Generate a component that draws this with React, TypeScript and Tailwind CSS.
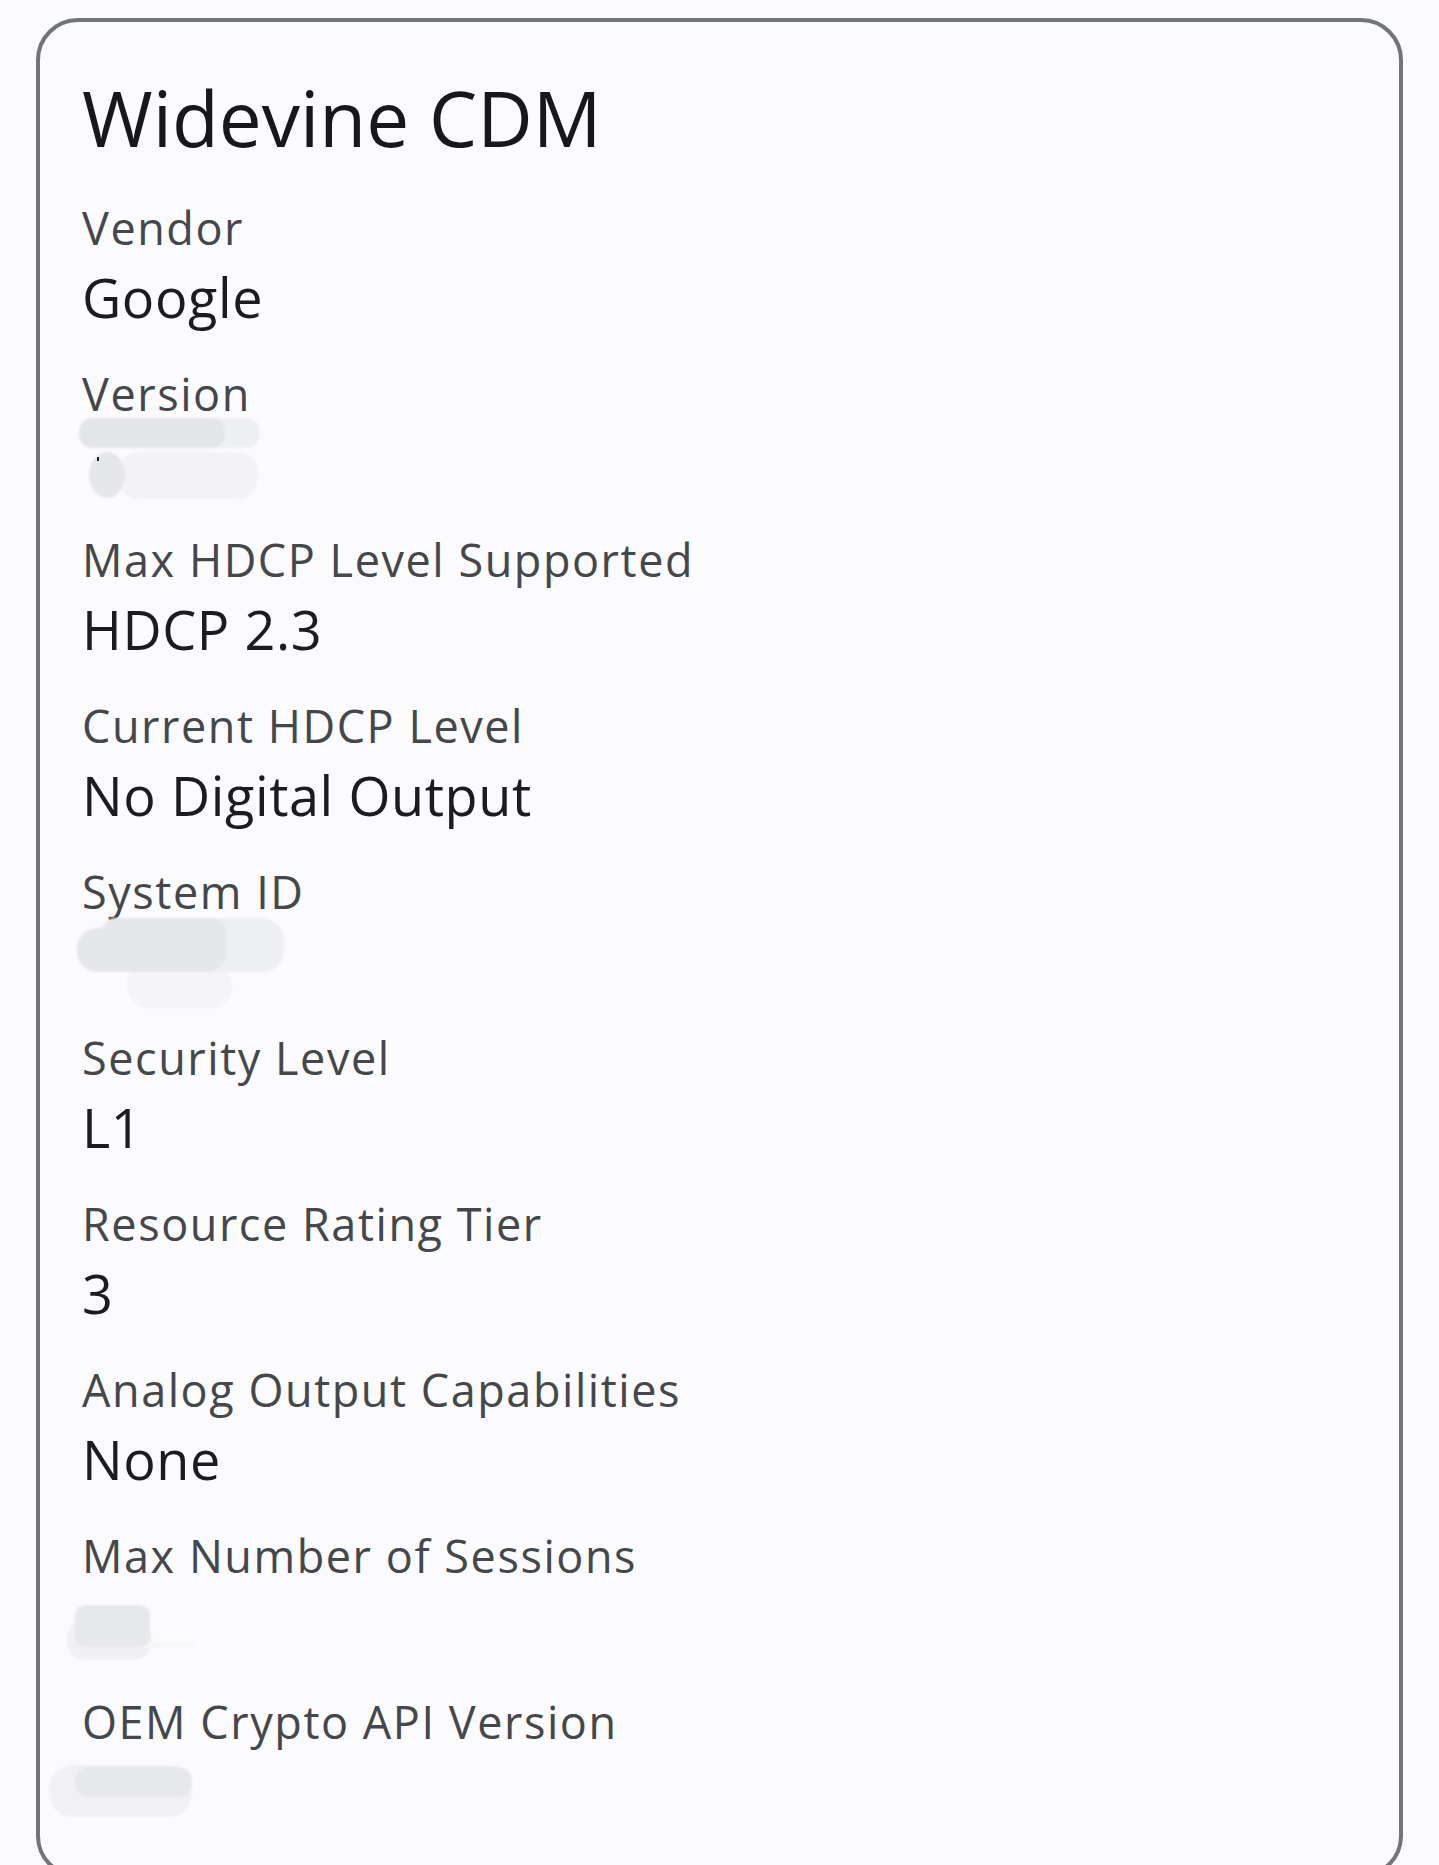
import React from "react";

type Blob = { kind: "rect" | "ellipse"; x: number; y: number; w: number; h: number; r?: number; fill: string };

function Smudge({ blobs, left, top, width, height }: { blobs: Blob[]; left: number; top: number; width: number; height: number }) {
  return (
    <svg
      className="absolute"
      style={{ left, top }}
      width={width}
      height={height}
      viewBox={`${left} ${top} ${width} ${height}`}
    >
      <defs>
        <filter id="soft" x="-20%" y="-20%" width="140%" height="140%">
          <feGaussianBlur stdDeviation="1.2" />
        </filter>
      </defs>
      <g filter="url(#soft)">
        {blobs.map((b, i) =>
          b.kind === "rect" ? (
            <rect key={i} x={b.x} y={b.y} width={b.w} height={b.h} rx={b.r ?? 0} fill={b.fill} />
          ) : (
            <ellipse key={i} cx={b.x + b.w / 2} cy={b.y + b.h / 2} rx={b.w / 2} ry={b.h / 2} fill={b.fill} />
          )
        )}
      </g>
    </svg>
  );
}

const versionBlobs: Blob[] = [
  { kind: "rect", x: 36, y: 24, w: 140, h: 47, r: 20, fill: "#f3f3f5" },
  { kind: "rect", x: -3, y: -10, w: 181, h: 30, r: 14, fill: "#eeeff1" },
  { kind: "rect", x: -3, y: -10, w: 146, h: 30, r: 14, fill: "#e4e5e7" },
  { kind: "ellipse", x: 7, y: 24, w: 36, h: 46, fill: "#e6e7e9" },
];

const systemBlobs: Blob[] = [
  { kind: "rect", x: 45, y: 38, w: 105, h: 44, r: 20, fill: "#f5f5f7" },
  { kind: "rect", x: 100, y: -8, w: 102, h: 54, r: 22, fill: "#eeeff1" },
  { kind: "rect", x: -5, y: 2, w: 149, h: 44, r: 20, fill: "#e6e7e9" },
  { kind: "rect", x: 20, y: -8, w: 124, h: 32, r: 14, fill: "#e6e7e9" },
];

const sessionBlobs: Blob[] = [
  { kind: "rect", x: -15, y: 30, w: 85, h: 40, r: 18, fill: "#f1f1f3" },
  { kind: "rect", x: 60, y: 52, w: 54, h: 6, r: 3, fill: "#f6f6f8" },
  { kind: "rect", x: -7, y: 15, w: 75, h: 42, r: 10, fill: "#e7e8ea" },
];

const oemBlobs: Blob[] = [
  { kind: "rect", x: -33, y: 9, w: 143, h: 52, r: 24, fill: "#f1f1f3" },
  { kind: "rect", x: -7, y: 11, w: 117, h: 30, r: 14, fill: "#e7e8ea" },
];

function Row({ label, value, smudge, mark }: { label: string; value?: string; smudge?: Blob[]; mark?: boolean }) {
  return (
    <div className="flex flex-col">
      <div className="text-[45px] leading-[60px] tracking-[1.55px] text-[#45474b]">{label}</div>
      <div className="relative mt-[4px] h-[70px] text-[54px] leading-[70px] tracking-[0.6px] text-[#1b1c1e]">
        {value}
        {smudge && (
          <Smudge blobs={smudge} left={-40} top={-20} width={260} height={110} />
        )}
        {mark && <div className="absolute left-[15px] top-[29px] h-[4px] w-[2px] bg-[#222]" />}
      </div>
    </div>
  );
}

export default function App() {
  return (
    <div
      className="min-h-[1865px] bg-[#fbfbfd] pl-[36px] pr-[36px] pt-[18px]"
      style={{ fontFamily: '"Open Sans", "Noto Sans", sans-serif' }}
    >
      <div className="h-[1860px] rounded-[42px] border-4 border-[#70757a] bg-[#fbfbfd] pl-[42px] pt-[47px]">
        <div className="text-[76.5px] leading-[96px] text-[#17181a]">Widevine CDM</div>
        <div className="mt-[33px] flex flex-col gap-[32px]">
          <Row label="Vendor" value="Google" />
          <Row label="Version" smudge={versionBlobs} mark />
          <Row label="Max HDCP Level Supported" value="HDCP 2.3" />
          <Row label="Current HDCP Level" value="No Digital Output" />
          <Row label="System ID" smudge={systemBlobs} />
          <Row label="Security Level" value="L1" />
          <Row label="Resource Rating Tier" value="3" />
          <Row label="Analog Output Capabilities" value="None" />
          <Row label="Max Number of Sessions" smudge={sessionBlobs} />
          <Row label="OEM Crypto API Version" smudge={oemBlobs} />
        </div>
      </div>
    </div>
  );
}
